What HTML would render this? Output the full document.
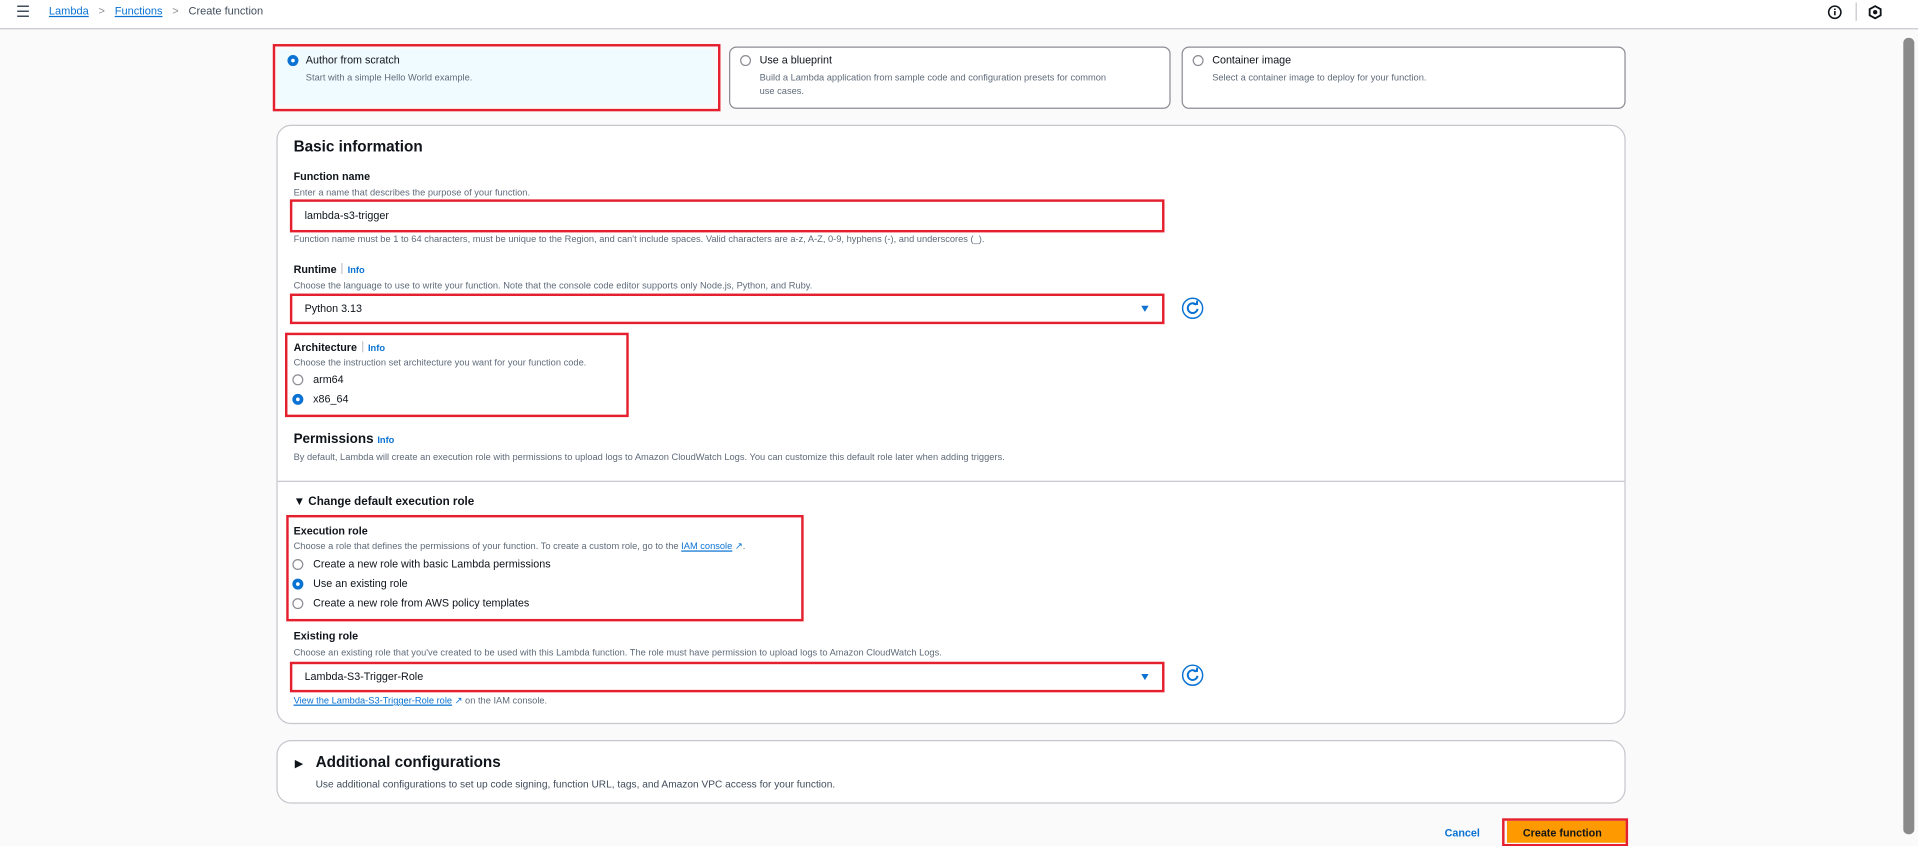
<!DOCTYPE html>
<html><head><meta charset="utf-8"><style>
*{box-sizing:border-box;margin:0;padding:0}
body{width:1918px;height:845px;background:#fafafa;font-family:"Liberation Sans",sans-serif;color:#0f141a;position:relative;overflow:hidden}
#w{position:absolute;left:0;top:0;width:1568px;height:691px;transform:scale(1.2232);transform-origin:0 0}
.a{position:absolute;white-space:nowrap}
.hdr{position:absolute;left:0;top:0;width:1568px;height:24px;background:#fff;border-bottom:1px solid #c6c6cd}
.lnk{color:#0972d3;text-decoration:underline}
.d{font-size:7.6px;color:#5f6b7a}
.lb{font-size:8.8px;font-weight:bold}
.red{position:absolute;border:2.5px solid #e5202e}
.card{position:absolute;background:#fff;border:1px solid #c6c6cd;border-radius:12px}
.rad{position:absolute;width:9px;height:9px;border-radius:50%;border:1px solid #8c8c94;background:#fff}
.rad.on{border:3px solid #0972d3}
.t{font-size:8.8px}
.info{font-size:7.6px;font-weight:bold;color:#0972d3}
.sep{display:inline-block;width:1px;height:9px;background:#c6c6cd;margin:0 4px;vertical-align:-1px}
.tri{position:absolute;width:0;height:0;border-left:3.5px solid transparent;border-right:3.5px solid transparent;border-top:5px solid #0972d3}
.ref{position:absolute;width:18px;height:18px}
</style></head><body><div id="w">
<div class="hdr"></div>
<div class="a" style="left:13px;top:2px;font-size:13px;color:#414d5c">&#9776;</div>
<div class="a" style="left:40px;top:4px;font-size:9px"><span class="lnk">Lambda</span><span style="color:#8c8c94;margin:0 8px">&gt;</span><span class="lnk">Functions</span><span style="color:#8c8c94;margin:0 8px">&gt;</span><span style="color:#414d5c">Create function</span></div>
<svg class="a" style="left:1494px;top:4px" width="12" height="12" viewBox="0 0 12 12"><circle cx="6" cy="6" r="5" fill="none" stroke="#0f141a" stroke-width="1.3"/><rect x="5.4" y="5" width="1.3" height="3.5" fill="#0f141a"/><rect x="5.4" y="3" width="1.3" height="1.2" fill="#0f141a"/></svg>
<div class="a" style="left:1517px;top:2px;width:1px;height:15px;background:#c6c6cd"></div>
<svg class="a" style="left:1527px;top:4px" width="12" height="12" viewBox="0 0 12 12"><polygon points="6,1 10.5,3.5 10.5,8.5 6,11 1.5,8.5 1.5,3.5" fill="none" stroke="#0f141a" stroke-width="1.5"/><circle cx="6" cy="6" r="1.8" fill="#0f141a"/></svg>
<div class="a" style="left:1556px;top:31px;width:9px;height:651px;background:#8a8a8a;border-radius:4px"></div>

<div class="a" style="left:227px;top:40px;width:357px;height:46px;background:#f0fbff"></div>
<div class="red" style="left:223px;top:36px;width:366px;height:55px"></div>
<div class="rad on" style="left:235px;top:45px"></div>
<div class="a t" style="left:250px;top:44px">Author from scratch</div>
<div class="a d" style="left:250px;top:59px">Start with a simple Hello World example.</div>
<div class="card" style="left:596px;top:38px;width:361px;height:51px;border-radius:6px;border-color:#8c8c94"></div>
<div class="rad" style="left:605px;top:45px"></div>
<div class="a t" style="left:621px;top:44px">Use a blueprint</div>
<div class="a d" style="left:621px;top:58px;line-height:11px">Build a Lambda application from sample code and configuration presets for common<br>use cases.</div>
<div class="card" style="left:966px;top:38px;width:363px;height:51px;border-radius:6px;border-color:#8c8c94"></div>
<div class="rad" style="left:975px;top:45px"></div>
<div class="a t" style="left:991px;top:44px">Container image</div>
<div class="a d" style="left:991px;top:59px">Select a container image to deploy for your function.</div>

<div class="card" style="left:226px;top:102px;width:1103px;height:490px"></div>
<div class="a" style="left:227px;top:393px;width:1101px;height:1px;background:#c6c6cd"></div>
<div class="a" style="left:240px;top:113px;font-size:12.5px;font-weight:bold">Basic information</div>
<div class="a lb" style="left:240px;top:139px">Function name</div>
<div class="a d" style="left:240px;top:153px">Enter a name that describes the purpose of your function.</div>
<div class="red" style="left:237px;top:163px;width:715px;height:27px"></div>
<div class="a t" style="left:249px;top:171px">lambda-s3-trigger</div>
<div class="a d" style="left:240px;top:191px">Function name must be 1 to 64 characters, must be unique to the Region, and can't include spaces. Valid characters are a-z, A-Z, 0-9, hyphens (-), and underscores (_).</div>
<div class="a lb" style="left:240px;top:215px">Runtime<span class="sep"></span><span class="info">Info</span></div>
<div class="a d" style="left:240px;top:229px">Choose the language to use to write your function. Note that the console code editor supports only Node.js, Python, and Ruby.</div>
<div class="red" style="left:237px;top:240px;width:715px;height:25px"></div>
<div class="a t" style="left:249px;top:247px">Python 3.13</div>
<div class="tri" style="left:933px;top:250px"></div>
<svg class="ref" style="left:966px;top:243px" viewBox="0 0 18 18"><circle cx="9" cy="9" r="8.2" fill="none" stroke="#0972d3" stroke-width="1.2"/><path d="M12 6.2A4 4 0 1 0 13 9.5" fill="none" stroke="#0972d3" stroke-width="1.6"/><path d="M9.8 5.5L12.6 5.5L12.6 2.8" fill="none" stroke="#0972d3" stroke-width="1.6"/></svg>

<div class="red" style="left:233px;top:272px;width:281px;height:69px"></div>
<div class="a lb" style="left:240px;top:279px">Architecture<span class="sep"></span><span class="info">Info</span></div>
<div class="a d" style="left:240px;top:292px">Choose the instruction set architecture you want for your function code.</div>
<div class="rad" style="left:239px;top:306px"></div>
<div class="a t" style="left:256px;top:305px">arm64</div>
<div class="rad on" style="left:239px;top:322px"></div>
<div class="a t" style="left:256px;top:321px">x86_64</div>

<div class="a" style="left:240px;top:353px;font-size:11px;font-weight:bold">Permissions <span class="info">Info</span></div>
<div class="a d" style="left:240px;top:369px">By default, Lambda will create an execution role with permissions to upload logs to Amazon CloudWatch Logs. You can customize this default role later when adding triggers.</div>
<div class="a" style="left:240px;top:405px;font-size:9.5px;font-weight:bold">&#9660; Change default execution role</div>

<div class="red" style="left:234px;top:421px;width:423px;height:87px"></div>
<div class="a lb" style="left:240px;top:429px">Execution role</div>
<div class="a d" style="left:240px;top:442px">Choose a role that defines the permissions of your function. To create a custom role, go to the <span class="lnk">IAM console</span> <span style="color:#0972d3">&#8599;</span>.</div>
<div class="rad" style="left:239px;top:457px"></div>
<div class="a t" style="left:256px;top:456px">Create a new role with basic Lambda permissions</div>
<div class="rad on" style="left:239px;top:473px"></div>
<div class="a t" style="left:256px;top:472px">Use an existing role</div>
<div class="rad" style="left:239px;top:489px"></div>
<div class="a t" style="left:256px;top:488px">Create a new role from AWS policy templates</div>

<div class="a lb" style="left:240px;top:515px">Existing role</div>
<div class="a d" style="left:240px;top:529px">Choose an existing role that you've created to be used with this Lambda function. The role must have permission to upload logs to Amazon CloudWatch Logs.</div>
<div class="red" style="left:237px;top:541px;width:715px;height:25px"></div>
<div class="a t" style="left:249px;top:548px">Lambda-S3-Trigger-Role</div>
<div class="tri" style="left:933px;top:551px"></div>
<svg class="ref" style="left:966px;top:543px" viewBox="0 0 18 18"><circle cx="9" cy="9" r="8.2" fill="none" stroke="#0972d3" stroke-width="1.2"/><path d="M12 6.2A4 4 0 1 0 13 9.5" fill="none" stroke="#0972d3" stroke-width="1.6"/><path d="M9.8 5.5L12.6 5.5L12.6 2.8" fill="none" stroke="#0972d3" stroke-width="1.6"/></svg>
<div class="a d" style="left:240px;top:568px"><span class="lnk">View the Lambda-S3-Trigger-Role role</span> <span style="color:#0972d3">&#8599;</span> on the IAM console.</div>

<div class="card" style="left:226px;top:605px;width:1103px;height:52px"></div>
<div class="a" style="left:241px;top:619px;font-size:9px">&#9654;</div>
<div class="a" style="left:258px;top:616px;font-size:12.5px;font-weight:bold">Additional configurations</div>
<div class="a" style="left:258px;top:636px;font-size:8.3px;color:#414d5c">Use additional configurations to set up code signing, function URL, tags, and Amazon VPC access for your function.</div>

<div class="a" style="left:1181px;top:676px;font-size:8.8px;font-weight:bold;color:#0972d3">Cancel</div>
<div class="a" style="left:1232px;top:671px;width:97px;height:18px;background:#ff9900"></div>
<div class="red" style="left:1228px;top:669px;width:103px;height:23px"></div>
<div class="a" style="left:1245px;top:676px;font-size:8.8px;font-weight:bold">Create function</div>
</div></body></html>
